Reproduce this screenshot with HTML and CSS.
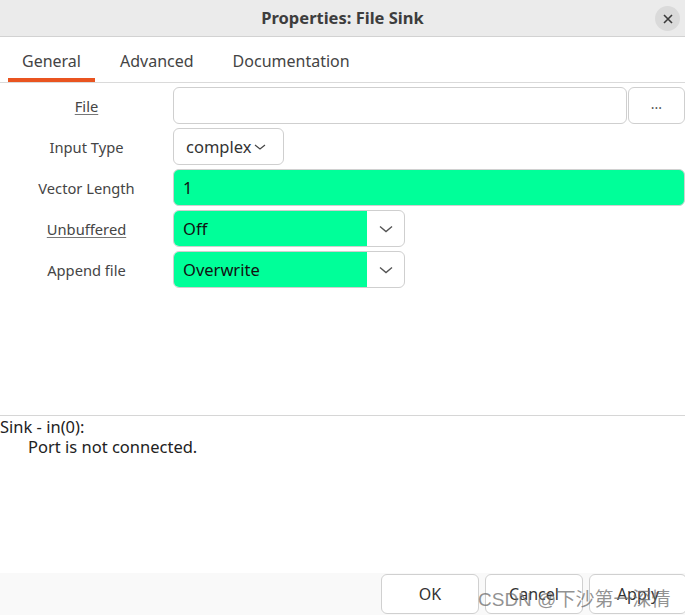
FILE: index.html
```html
<!DOCTYPE html>
<html lang="en">
<head>
    <meta charset="UTF-8">
    <title>Properties: File Sink</title>
    <link rel="stylesheet" href="styles.css">
</head>
<body>
    <div class="dialog">
        <div class="titlebar">
            <span class="title">Properties: File Sink</span>
            <span class="close">
                <svg width="10" height="10" viewBox="0 0 10 10"><path d="M1 1L9 9M9 1L1 9" stroke="#3a3a3a" stroke-width="1.6"/></svg>
            </span>
        </div>

        <div class="tabs">
            <div class="tab active">General</div>
            <div class="tab">Advanced</div>
            <div class="tab">Documentation</div>
        </div>

        <div class="form">
            <div class="label"><u>File</u></div>
            <div class="field-group">
                <div class="entry"></div>
                <div class="btn-dots">...</div>
            </div>

            <div class="label">Input Type</div>
            <div><div class="combo-small">complex <svg width="12" height="8" viewBox="0 0 12 8"><path d="M1 2L6 6L11 2" fill="none" stroke="#444" stroke-width="1.2"/></svg></div></div>

            <div class="label">Vector Length</div>
            <div class="entry green">1</div>

            <div class="label"><u>Unbuffered</u></div>
            <div class="combo">
                <div class="combo-value">Off</div>
                <div class="combo-arrow"><svg width="14" height="8" viewBox="0 0 14 8"><path d="M1 1.5L7 6.5L13 1.5" fill="none" stroke="#555" stroke-width="1.4"/></svg></div>
            </div>

            <div class="label">Append file</div>
            <div class="combo">
                <div class="combo-value">Overwrite</div>
                <div class="combo-arrow"><svg width="14" height="8" viewBox="0 0 14 8"><path d="M1 1.5L7 6.5L13 1.5" fill="none" stroke="#555" stroke-width="1.4"/></svg></div>
            </div>
        </div>

        <div class="messages">
            <div>Sink - in(0):</div>
            <div class="indent">Port is not connected.</div>
        </div>

        <div class="footer">
            <div class="btn">OK</div>
            <div class="btn">Cancel</div>
            <div class="btn">Apply</div>
        </div>

        <div class="watermark">CSDN @下沙第一深情</div>
    </div>
</body>
</html>
```

FILE: styles.css
```css
body {
    margin: 0;
    font-family: "Noto Sans", "DejaVu Sans", sans-serif;
    color: #3c3c3c;
    background: white;
}
.dialog {
    position: relative;
    width: 685px;
    height: 615px;
    display: flex;
    flex-direction: column;
    overflow: hidden;
}
.titlebar {
    height: 37px;
    background: #ebebeb;
    border-bottom: 1px solid #d2d2d2;
    display: flex;
    align-items: center;
    justify-content: center;
    position: relative;
    padding-bottom: 2px;
    box-sizing: border-box;
}
.title {
    font-weight: bold;
    font-size: 16.5px;
    color: #3d3d3d;
}
.close {
    position: absolute;
    right: 5px;
    top: 6px;
    width: 25px;
    height: 25px;
    border-radius: 50%;
    background: #dadada;
    display: flex;
    align-items: center;
    justify-content: center;
}
.tabs {
    height: 46px;
    display: flex;
    padding-left: 8px;
    gap: 11px;
    border-bottom: 1px solid #dadada;
    box-sizing: border-box;
}
.tab {
    padding: 7px 14px 0;
    font-size: 16px;
    color: #444;
    box-sizing: border-box;
    height: 45px;
    border-bottom: 4px solid transparent;
    line-height: 34px;
}
.tab.active {
    border-bottom-color: #e95420;
}
.form {
    display: grid;
    grid-template-columns: 173px 1fr;
    grid-auto-rows: 37px;
    row-gap: 4px;
    padding-top: 4px;
    height: 333px;
    border-bottom: 1px solid #d6d6d6;
    box-sizing: border-box;
}
.label {
    font-size: 14.7px;
    color: #454545;
    display: flex;
    align-items: center;
    justify-content: center;
}
.label u {
    text-decoration-color: #777;
    text-underline-offset: 2px;
}
.field-group {
    display: flex;
}
.entry {
    flex: 1;
    border: 1px solid #cfcfcf;
    border-radius: 6px;
    background: white;
    font-size: 16.5px;
    color: #111;
    display: flex;
    align-items: center;
    padding-left: 9px;
}
.entry.green {
    background: #00ff99;
    border-color: #d0d0d0;
}
.btn-dots {
    width: 55px;
    border: 1px solid #cfcfcf;
    border-radius: 6px;
    margin-left: 1px;
    font-size: 14px;
    text-align: center;
    line-height: 32px;
    color: #555;
}
.combo-small {
    display: inline-flex;
    align-items: center;
    gap: 3px;
    height: 37px;
    width: 111px;
    box-sizing: border-box;
    border: 1px solid #cfcfcf;
    border-radius: 6px;
    padding-left: 12px;
    font-size: 16.5px;
    color: #333;
}
.combo {
    width: 232px;
    display: flex;
    border: 1px solid #cfcfcf;
    border-radius: 6px;
    overflow: hidden;
    box-sizing: border-box;
}
.combo-value {
    width: 193px;
    background: #00ff99;
    font-size: 16.5px;
    color: #111;
    display: flex;
    align-items: center;
    padding-left: 9px;
    box-sizing: border-box;
}
.combo-arrow {
    flex: 1;
    display: flex;
    align-items: center;
    justify-content: center;
}
.messages {
    flex: 1;
    font-size: 16.5px;
    color: #222;
    line-height: 20px;
    padding-top: 1px;
}
.messages .indent {
    padding-left: 28px;
}
.footer {
    height: 42px;
    background: #f9f9f9;
    display: flex;
    justify-content: flex-end;
    gap: 6px;
    padding-top: 1px;
    box-sizing: border-box;
}
.btn {
    width: 98px;
    height: 40px;
    box-sizing: border-box;
    border: 1px solid #d0d0d0;
    border-radius: 6px;
    background: white;
    display: flex;
    align-items: center;
    justify-content: center;
    font-size: 16px;
    color: #333;
}
.btn:last-child {
    margin-right: -2px;
}
.watermark {
    position: absolute;
    left: 478px;
    top: 584px;
    font-size: 19px;
    color: rgba(110, 110, 110, 0.75);
    font-family: "Liberation Sans", "Noto Sans CJK SC", sans-serif;
    white-space: nowrap;
}
```
